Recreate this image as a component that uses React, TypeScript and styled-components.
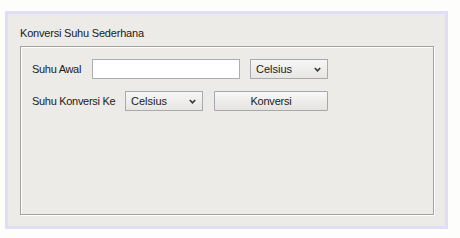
import React from "react";
import styled, { createGlobalStyle } from "styled-components";

const Global = createGlobalStyle`
  html, body { margin: 0; padding: 0; background: #fdfdfc; }
  body { font-family: "Liberation Sans", Arial, sans-serif; font-size: 11px; color: #1a1a1a; }
`;

const Page = styled.div`
  padding: 11px 0 0 5px;
`;

const Frame = styled.div`
  box-sizing: border-box;
  width: 443px;
  height: 218px;
  border: 3px solid #e0def7;
  background: #ecebe8;
  padding: 13px 11px 11px 12px;
  display: flex;
  flex-direction: column;
`;

const Title = styled.div`
  height: 19px;
  line-height: 13px;
  letter-spacing: -0.2px;
`;

const Group = styled.div`
  flex: 1;
  border: 1px solid #a2a29f;
  box-shadow: 1px 1px 0 #ffffff, inset 1px 1px 0 #ffffff;
  padding: 12px 11px;
  display: flex;
  flex-direction: column;
  gap: 12px;
`;

const Row = styled.div`
  display: flex;
  align-items: center;
  height: 20px;
`;

const Label = styled.span<{ $w: number }>`
  width: ${(p) => p.$w}px;
  flex: none;
  letter-spacing: -0.3px;
`;

const Input = styled.input`
  box-sizing: border-box;
  width: 148px;
  height: 20px;
  margin: 0 10px 0 0;
  border: 1px solid #a9aeb5;
  background: #ffffff;
  outline: none;
  padding: 0 3px;
  font: inherit;
`;

const SelectBox = styled.div<{ $mr?: number }>`
  box-sizing: border-box;
  width: 78px;
  height: 20px;
  border: 1px solid #a7abb0;
  background: linear-gradient(#f6f6f5, #e7e6e3);
  display: flex;
  align-items: center;
  justify-content: space-between;
  padding: 0 6px 0 5px;
  margin-right: ${(p) => p.$mr ?? 0}px;
`;

const Button = styled.button`
  box-sizing: border-box;
  width: 114px;
  height: 20px;
  border: 1px solid #a5a8ad;
  border-radius: 1px;
  background: linear-gradient(#f8f8f7, #e4e3e0);
  font: inherit;
  color: #1a1a1a;
  padding: 0;
  letter-spacing: -0.2px;
`;

const Chevron = () => (
  <svg width="7" height="5" viewBox="0 0 7 5">
    <polyline points="0.8,1 3.5,3.8 6.2,1" fill="none" stroke="#3c3c3c" strokeWidth="1.7" />
  </svg>
);

const Select = ({ mr }: { mr?: number }) => (
  <SelectBox $mr={mr}>
    <span>Celsius</span>
    <Chevron />
  </SelectBox>
);

export default function App() {
  return (
    <Page>
      <Global />
      <Frame>
        <Title>Konversi Suhu Sederhana</Title>
        <Group>
          <Row>
            <Label $w={60}>Suhu Awal</Label>
            <Input />
            <Select />
          </Row>
          <Row>
            <Label $w={93}>Suhu Konversi Ke</Label>
            <Select mr={11} />
            <Button>Konversi</Button>
          </Row>
        </Group>
      </Frame>
    </Page>
  );
}
